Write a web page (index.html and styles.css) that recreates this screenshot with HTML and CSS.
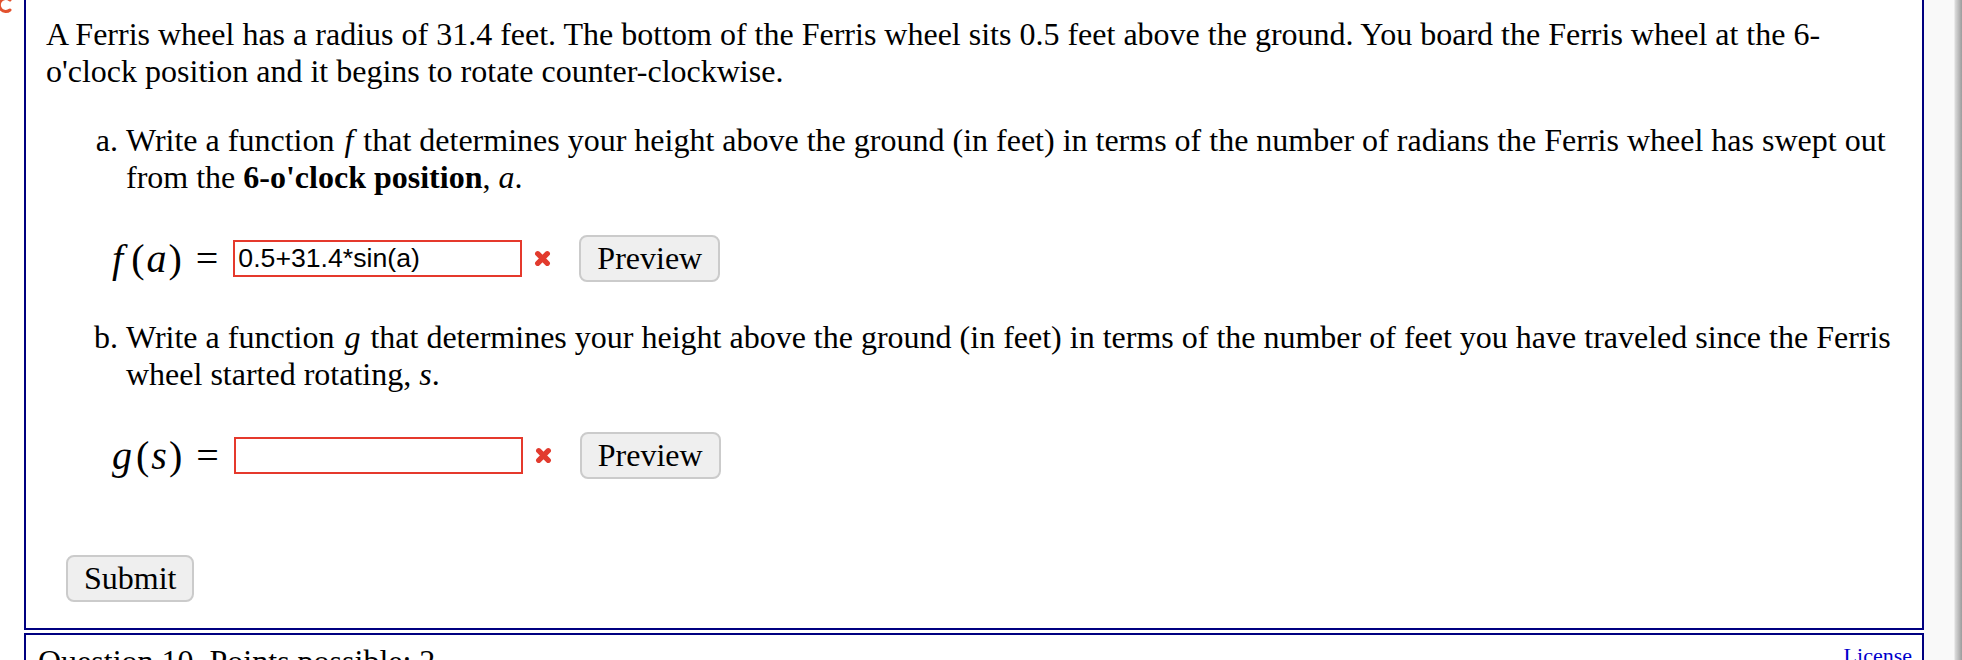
FILE: index.html
```html
<!DOCTYPE html>
<html lang="en">
<head>
<meta charset="utf-8">
<title>Ferris wheel question</title>
<link rel="stylesheet" href="styles.css">
</head>
<body>
<div class="window">
  <div class="gutter">
    <svg class="retry-icon" viewBox="0 0 14 16" aria-hidden="true">
      <path d="M12 2 A6.5 6.5 0 1 0 12 12" fill="none" stroke="#e2522f" stroke-width="3" stroke-linecap="round"/>
    </svg>
  </div>
  <div class="main">
    <div class="question">
      <p class="intro">A Ferris wheel has a radius of 31.4 feet. The bottom of the Ferris wheel sits 0.5 feet above the ground. You board the Ferris wheel at the 6-o'clock position and it begins to rotate counter-clockwise.</p>
      <ol class="parts">
        <li>
          <p>Write a function <span class="mv tv">f</span> that determines your height above the ground (in feet) in terms of the number of radians the Ferris wheel has swept out from the <b>6-o'clock position</b>, <span class="mv">a</span>.</p>
          <div class="answer-row">
            <span class="eq"><span class="mv mf">f</span><span class="mp">(</span><span class="mv">a</span><span class="mp">)</span><span class="meq">=</span></span>
            <input class="ans" type="text" value="0.5+31.4*sin(a)">
            <svg class="xmark" viewBox="0 0 16 16" aria-hidden="true"><path d="M3.5 3.5 L12.5 12.5 M12.5 3.5 L3.5 12.5" stroke="#e23b2e" stroke-width="5" stroke-linecap="round"/></svg>
            <button class="btn">Preview</button>
          </div>
        </li>
        <li>
          <p>Write a function <span class="mv tv">g</span> that determines your height above the ground (in feet) in terms of the number of feet you have traveled since the Ferris wheel started rotating, <span class="mv">s</span>.</p>
          <div class="answer-row">
            <span class="eq"><span class="mv mg">g</span><span class="mp">(</span><span class="mv">s</span><span class="mp">)</span><span class="meq">=</span></span>
            <input class="ans" type="text" value="">
            <svg class="xmark" viewBox="0 0 16 16" aria-hidden="true"><path d="M3.5 3.5 L12.5 12.5 M12.5 3.5 L3.5 12.5" stroke="#e23b2e" stroke-width="5" stroke-linecap="round"/></svg>
            <button class="btn">Preview</button>
          </div>
        </li>
      </ol>
      <div class="submit-row"><button class="btn">Submit</button></div>
    </div>
    <div class="question next">
      <span class="qtitle">Question 10. Points possible: 2</span>
      <a class="license" href="#">License</a>
    </div>
  </div>
  <div class="scrollbar"></div>
</div>
</body>
</html>
```
FILE: styles.css
```css
html, body {
  margin: 0;
  padding: 0;
  background: #fff;
}
body {
  font-family: "Liberation Serif", "Times New Roman", serif;
  font-size: 32px;
  color: #000;
}
.window {
  display: flex;
  height: 660px;
  overflow: hidden;
}
.gutter {
  width: 24px;
  flex: none;
}
.retry-icon {
  display: block;
  width: 14px;
  height: 16px;
  margin-left: -2px;
  margin-top: -2px;
}
.main {
  flex: 1;
  min-width: 0;
}
.question {
  border: 2px solid #000080;
  border-top: none;
  padding: 16px 20px 26px 20px;
}
.intro {
  margin: 0 0 32px;
}
.parts {
  margin: 32px 0;
  padding-left: 80px;
  list-style-type: lower-alpha;
}
.parts p {
  margin: 32px 0;
}
.mv {
  font-style: italic;
}
.tv {
  padding: 0 2px;
}
.answer-row {
  display: flex;
  align-items: center;
  padding: 7px 0 5px;
  margin: 32px 0;
}
.eq {
  font-size: 40px;
  display: inline-flex;
  align-items: baseline;
  margin-left: -16px;
  line-height: 1;
}
.mf {
  padding: 0 6px 0 2px;
}
.mg {
  padding: 0 2px 0 2px;
}
.mp {
  padding: 0 2px;
}
.meq {
  margin-left: 12px;
}
.ans {
  box-sizing: border-box;
  width: 289px;
  height: 37px;
  margin-left: 15px;
  padding: 0 3px;
  border: 2px solid #e5392c;
  border-radius: 0;
  font-family: "Liberation Sans", Arial, sans-serif;
  font-size: 26.67px;
  color: #000;
  background: #fff;
  outline: none;
}
.xmark {
  width: 17px;
  height: 17px;
  margin-left: 12px;
  flex: none;
}
.btn {
  font-family: "Liberation Serif", "Times New Roman", serif;
  font-size: 32px;
  line-height: normal;
  color: #000;
  background: #efefef;
  border: 2px solid #cbcbcb;
  border-radius: 8px;
  padding: 3px 16px;
}
.answer-row .btn {
  margin-left: 28px;
}
.submit-row {
  padding-top: 39px;
  padding-left: 20px;
}
.question.next {
  border: 2px solid #000080;
  border-bottom: none;
  margin-top: 3px;
  padding: 8px 10px 0 12px;
  display: flex;
  justify-content: space-between;
  align-items: flex-start;
}
.license {
  font-size: 22px;
  color: #0000cc;
  text-decoration: none;
}
.scrollbar {
  width: 38px;
  flex: none;
  background: linear-gradient(to right, #f9f9f9 0, #f9f9f9 30px, #dcdcdc 31px, #9c9c9c 38px);
}
```
